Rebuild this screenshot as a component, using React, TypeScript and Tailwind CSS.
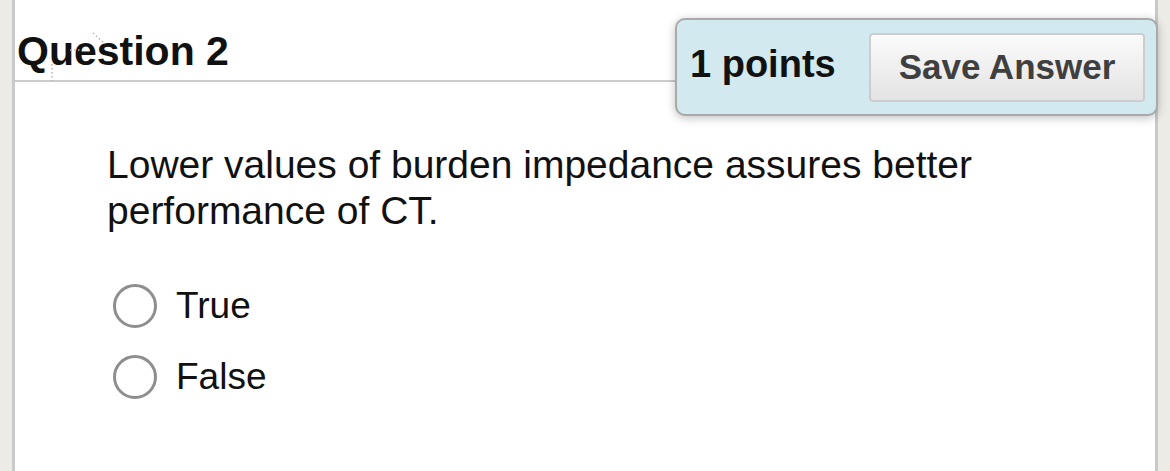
import React from 'react';

// Quiz question card: header with points badge, prompt and true/false radios

type Choice = { id: string; label: string };

const choices: Choice[] = [
  { id: 'true', label: 'True' },
  { id: 'false', label: 'False' },
];

function RadioRow({ choice }: { choice: Choice }) {
  return (
    <label className="flex h-[71px] items-center gap-[19px]">
      <span className="h-[44px] w-[44px] shrink-0 rounded-full border-[3.5px] border-[#8e8e8e] bg-white" />
      <span className="text-[37px] leading-[44px] text-[#111]">{choice.label}</span>
    </label>
  );
}

function PointsBox() {
  return (
    <div className="absolute left-[660px] top-[18px] -right-[3px] flex h-[98px] items-center justify-between rounded-[10px] border-2 border-[#a9a9a9] bg-[#d2e9ef] pl-[13px] pr-[11px] shadow-[0_2px_10px_rgba(0,0,0,0.25)]">
      <span className="mb-[7px] text-[38px] font-bold leading-[44px] text-[#111]">1 points</span>
      <button className="h-[69px] w-[276px] rounded-[4px] border-2 border-[#cdcdcd] bg-gradient-to-b from-[#fbfbfb] to-[#e3e3e3] text-[35px] font-bold text-[#3f3f3f]">
        Save Answer
      </button>
    </div>
  );
}

export default function App() {
  return (
    <div className="flex h-[471px] w-[1170px] overflow-hidden bg-[#ecebe6] px-[12px] font-['Liberation_Sans',Arial,sans-serif]">
      <div className="relative flex-1 border-x-[3px] border-[#c9c9c9] bg-white">
        {/* Header */}
        <div className="border-b-2 border-[#cccccc] pb-[9px] pl-[2px] pt-[31px]">
          <h1 className="text-[41px] font-bold leading-[40px] text-[#111]">Question 2</h1>
        </div>

        {/* faint dotted selection marks over the title */}
        <svg className="absolute left-[30px] top-[30px]" width="70" height="52" viewBox="0 0 70 52">
          <g stroke="#b5b5b5" strokeWidth="1.5" strokeDasharray="1.5 2.5" fill="none">
            <line x1="48" y1="3" x2="60" y2="14" />
            <line x1="25" y1="20" x2="36" y2="20" />
            <line x1="7" y1="34" x2="7" y2="51" />
          </g>
        </svg>

        <PointsBox />

        {/* Body */}
        <div className="pl-[92px] pt-[60px]">
          <p className="w-[900px] text-[39px] leading-[46px] text-[#111]">
            Lower values of burden impedance assures better performance of CT.
          </p>
          <div className="mt-[36px] flex flex-col pl-[6px]">
            {choices.map((c) => (
              <RadioRow key={c.id} choice={c} />
            ))}
          </div>
        </div>
      </div>
    </div>
  );
}
